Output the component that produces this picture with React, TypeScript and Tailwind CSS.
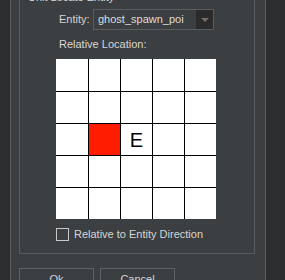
import React from 'react';

const cols = '32px 31px 31px 31px 31px';

function Cell({ r, c }: { r: number; c: number }) {
  if (r === 2 && c === 1) return <div className="bg-[#ff1c00]" />;
  if (r === 2 && c === 2)
    return (
      <div className="bg-white flex items-center justify-center text-[20px] leading-none text-black font-['Liberation_Sans',sans-serif]">
        E
      </div>
    );
  return <div className="bg-white" />;
}

export default function App() {
  const cells = [];
  for (let r = 0; r < 5; r++) for (let c = 0; c < 5; c++) cells.push(<Cell key={`${r}-${c}`} r={r} c={c} />);

  return (
    <div className="w-[285px] h-[280px] overflow-hidden bg-[#2d2e30] font-['Liberation_Sans',Arial,sans-serif] text-[11px] leading-[13px] text-[#d6d6d6]">
      <div className="ml-[10px] w-[256px] h-[280px] flex flex-col border-x border-[#5c5f61] bg-[#3c3f41]">
        {/* Group box */}
        <div className="relative -mt-[4px] ml-[8px] w-[236px] h-[258px] shrink-0 border border-[#595c5e] flex flex-col">
          <span className="absolute left-[6px] -top-[6px] px-[2px] bg-[#3c3f41]">Unit Locate Entity</span>

          <div className="mt-[12px] flex items-center">
            <span className="ml-[39px] w-[34px]">Entity:</span>
            <div className="w-[121px] h-[21px] border border-[#5a5d5f] flex items-center">
              <span className="flex-1 pl-[4px] text-[#dcdcdc]">ghost_spawn_poi</span>
              <div className="w-[17px] h-full bg-[#2b2b2c] flex items-center justify-center">
                <svg width="8" height="4" viewBox="0 0 8 4">
                  <path d="M0 0H8L4 4Z" fill="#6e6e6e" />
                </svg>
              </div>
            </div>
          </div>

          <span className="mt-[8px] ml-[39px]">Relative Location:</span>

          <div
            className="mt-[8px] ml-[36px] w-[160px] h-[160px] grid gap-px bg-black"
            style={{ gridTemplateColumns: cols, gridTemplateRows: cols }}
          >
            {cells}
          </div>

          <label className="mt-[9px] ml-[36px] flex items-center gap-[5px]">
            <span className="w-[13px] h-[13px] border border-[#c8c8c8]" />
            <span>Relative to Entity Direction</span>
          </label>
        </div>

        {/* Buttons */}
        <div className="mt-[14px] ml-[8px] flex gap-[6px]">
          <button className="w-[75px] h-[23px] border border-[#5f6264] text-[#d6d6d6]">Ok</button>
          <button className="w-[75px] h-[23px] border border-[#5f6264] text-[#d6d6d6]">Cancel</button>
        </div>
      </div>
    </div>
  );
}
